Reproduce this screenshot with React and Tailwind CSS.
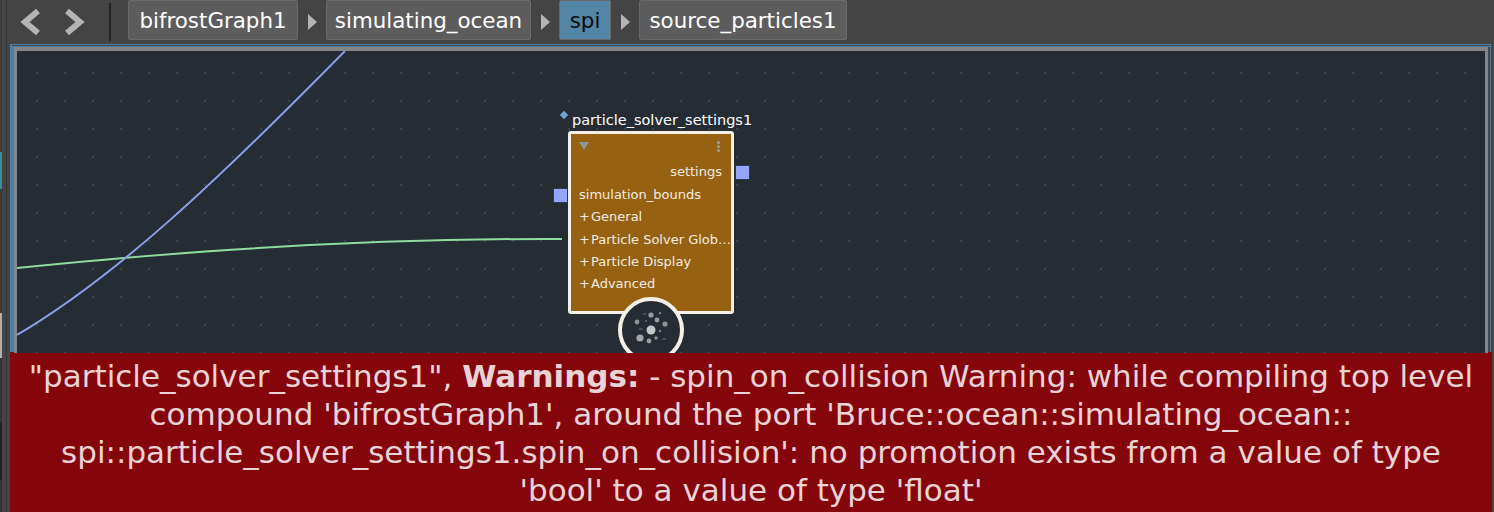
const dotGrid = {
  backgroundImage: "radial-gradient(circle, #6f7a82 0.5px, transparent 0.8px)",
  backgroundSize: "28px 28px",
  backgroundPosition: "6px 8px",
};

function Crumb({ label, active, className }) {
  return (
    <div
      className={
        (active
          ? "h-[40px] pt-[3px] flex items-center justify-center rounded-[2px] border border-[#6a6a6a] bg-[#5285a6] text-[#0c0c0c] "
          : "h-[40px] pt-[3px] flex items-center justify-center rounded-[2px] border border-[#6a6a6a] bg-[#5d5d5d] text-white ") + className
      }
    >
      {label}
    </div>
  );
}

function Sep() {
  return (
    <svg width="9" height="16" viewBox="0 0 9 16" className="mx-[9.5px] mt-[4px] shrink-0">
      <path d="M0 0 L9 8 L0 16 Z" fill="#b4b4b4" />
    </svg>
  );
}

function Port({ className }) {
  return <div className={"absolute bg-[#94a6fb] border border-[#2a3a55] " + className} />;
}

function Row({ label }) {
  return (
    <div className="h-[22.3px] pl-[8px] flex items-center text-[#f2ece2] whitespace-nowrap">
      <span className="mr-[3px] w-[9px] text-center text-[#e8e8e8]">+</span>
      {label}
    </div>
  );
}

function ParticleIcon() {
  // offsets from the centre of the glyph
  const dots = [
    [0, 0, 4.5, 0.9],
    [0, -15, 2.6, 0.65],
    [9, -17, 1.2, 0.5],
    [-14, -8, 2.4, 0.6],
    [6, -10, 2.4, 0.65],
    [14, -6, 2.6, 0.6],
    [-5, -9, 1, 0.4],
    [9, 1, 1.2, 0.5],
    [-11, 8, 3.6, 0.7],
    [-2, 11, 2.4, 0.65],
    [5, 8, 1.8, 0.55],
  ];
  return (
    <svg width="44" height="44" viewBox="-22 -22 44 44">
      {dots.map(([x, y, r, o], i) => (
        <circle key={i} cx={x} cy={y} r={r} fill="#d8d8d8" opacity={o} />
      ))}
      <path d="M-8 -16 H-5 M-12 -1 H-8 M11 9 H15" stroke="#d8d8d8" strokeWidth="1" opacity="0.4" />
    </svg>
  );
}

function Node() {
  return (
    <div className="absolute left-[551px] top-[80px] w-[166px] text-[13px]">
      <div className="absolute left-[-7px] top-[-19px] w-[6px] h-[6px] rotate-45 bg-[#6fa5cf]" />
      <div className="absolute left-[4px] top-[-21px] text-white text-[14.5px] whitespace-nowrap leading-[20px]">
        particle_solver_settings1
      </div>
      <div className="h-[183px] rounded-[3px] border-[3px] border-[#f4f0e8] bg-[#966110]">
        <div className="flex items-center justify-between pl-[8px] pr-[11px] h-[24px]">
          <svg width="10" height="8" viewBox="0 0 10 8">
            <path d="M0 0 H10 L5 8 Z" fill="#8d97a0" />
          </svg>
          <div className="flex flex-col gap-[1px]">
            <div className="w-[3px] h-[3px] rounded-full bg-[#98a0a6]" />
            <div className="w-[3px] h-[3px] rounded-full bg-[#98a0a6]" />
            <div className="w-[3px] h-[3px] rounded-full bg-[#98a0a6]" />
          </div>
        </div>
        <div className="h-[22px] mt-[3px] flex items-center justify-end pr-[9px] text-[#f2ece2]">settings</div>
        <div className="h-[22px] mt-[1px] pl-[8px] flex items-center text-[#f2ece2]">simulation_bounds</div>
        <Row label="General" />
        <Row label="Particle Solver Glob…" />
        <Row label="Particle Display" />
        <Row label="Advanced" />
      </div>
      <Port className="left-[167px] top-[34px] w-[15px] h-[15px]" />
      <Port className="left-[-15px] top-[57px] w-[15px] h-[15px]" />
      <div className="absolute left-[50px] top-[166px] w-[66px] h-[66px] rounded-full border-[4px] border-[#f4f0e8] bg-[#252c34] flex items-center justify-center">
        <ParticleIcon />
      </div>
    </div>
  );
}

export default function App() {
  return (
    <div className="w-[1494px] h-[512px] overflow-hidden flex bg-[#444444] [font-family:'DejaVu_Sans',sans-serif]">
      {/* clipped edge of the panel next door */}
      <div className="w-[7px] shrink-0 border-r border-[#363636]">
        <div className="w-[2px] h-full flex flex-col">
          <div className="h-[152px] bg-[#3c3c3c]" />
          <div className="h-[37px] bg-[#3f8d98]" />
          <div className="h-[124px] bg-[#3a3a3a]" />
          <div className="h-[45px] bg-[#b0b0b0]" />
          <div className="h-[64px] bg-[#333333]" />
          <div className="h-[58px] bg-[#222222]" />
          <div className="flex-1 bg-[#333333]" />
        </div>
      </div>

      <div className="flex-1 min-w-0 flex flex-col">
        <div className="h-[44px] shrink-0 flex items-start pl-[11px] text-[21.4px]">
          <div className="h-[40px] mt-[2px] flex items-center gap-[21px]">
            <svg width="24" height="32" viewBox="0 0 24 32" fill="none">
              <path d="M20 5 L7 16 L20 27" stroke="#b4b4b4" strokeWidth="6" />
            </svg>
            <svg width="24" height="32" viewBox="0 0 24 32" fill="none">
              <path d="M4 5 L17 16 L4 27" stroke="#b4b4b4" strokeWidth="6" />
            </svg>
          </div>
          <div className="w-[2px] h-[38px] mt-[3px] ml-[22px] mr-[17px] bg-[#222222]" />
          <div className="h-[40px] flex items-center">
            <Crumb label="bifrostGraph1" className="w-[170px]" />
            <Sep />
            <Crumb label="simulating_ocean" className="w-[205px]" />
            <Sep />
            <Crumb label="spi" active className="w-[52px]" />
            <Sep />
            <Crumb label="source_particles1" className="w-[208px]" />
          </div>
        </div>

        <div className="flex-1 min-h-0 flex flex-col pl-[3px] pr-[2px]">
          <div className="flex-1 min-h-0 border-t border-l-2 border-r border-[#4c7fa3] mr-[1px]">
            <div className="h-full mt-[1px] border-t border-l-2 border-[#4c7fa3] pr-[2px]">
              <div className="relative h-full border-t-[4px] border-x-[3px] border-[#858585] bg-[#252c34] overflow-hidden" style={dotGrid}>
                <svg className="absolute left-0 top-0" width="1468" height="301" fill="none">
                  <path d="M0 217 C 90 208, 300 187, 545 188" stroke="#8fdc9f" strokeWidth="2" />
                  <path d="M0 284 C 100 225, 200 130, 328 0" stroke="#8b9ee8" strokeWidth="2" />
                </svg>
                <Node />
              </div>
            </div>
          </div>
          <div className="h-[160px] shrink-0 pt-[1px] bg-[#85060a] flex flex-col justify-center text-center text-[#e9d3d6] text-[31px] leading-[38px] whitespace-nowrap">
            <p>"particle_solver_settings1", <b>Warnings:</b> - spin_on_collision Warning: while compiling top level</p>
            <p>compound 'bifrostGraph1', around the port 'Bruce::ocean::simulating_ocean::</p>
            <p>spi::particle_solver_settings1.spin_on_collision': no promotion exists from a value of type</p>
            <p>'bool' to a value of type 'float'</p>
          </div>
        </div>
      </div>
    </div>
  );
}
